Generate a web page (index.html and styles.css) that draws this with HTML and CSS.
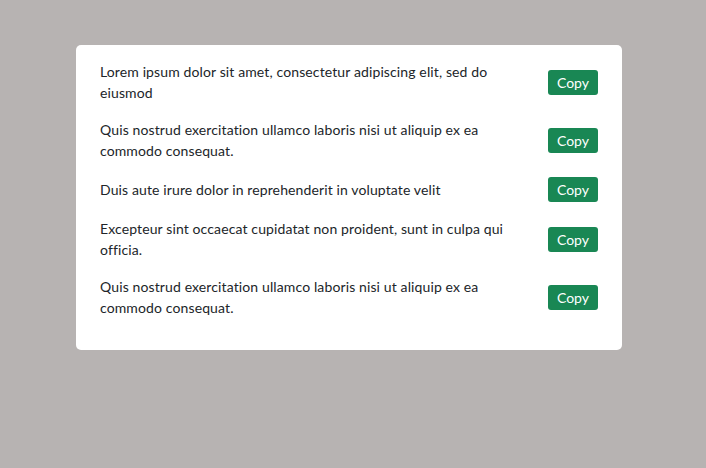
FILE: index.html
```html
<!DOCTYPE html>
<html>
<head>
	<title>copy list</title>
	<meta charset="utf-8"/>
	<link rel="stylesheet" href="styles.css">
</head>
<body>
	<div class="card">
		<div class="row">
			<div class="text">Lorem ipsum dolor sit amet, consectetur adipiscing elit, sed do eiusmod</div>
			<button class="btn">Copy</button>
		</div>
		<div class="row">
			<div class="text">Quis nostrud exercitation ullamco laboris nisi ut aliquip ex ea commodo consequat.</div>
			<button class="btn">Copy</button>
		</div>
		<div class="row">
			<div class="text">Duis aute irure dolor in reprehenderit in voluptate velit</div>
			<button class="btn">Copy</button>
		</div>
		<div class="row">
			<div class="text">Excepteur sint occaecat cupidatat non proident, sunt in culpa qui officia.</div>
			<button class="btn">Copy</button>
		</div>
		<div class="row">
			<div class="text">Quis nostrud exercitation ullamco laboris nisi ut aliquip ex ea commodo consequat.</div>
			<button class="btn">Copy</button>
		</div>
	</div>
</body>
</html>
```

FILE: styles.css
```css
html{
	background-color: #b7b3b2;
}
body{
	margin: 0;
	padding: 45px 0 0 76px;
	font-family: Lato, "Noto Sans", sans-serif;
	font-size: 14px;
	line-height: 21px;
	color: #212529;
}
.card{
	width: 498px;
	background-color: #fff;
	border-radius: 5px;
	padding: 16px 24px;
}
.row{
	display: flex;
	align-items: center;
	margin-bottom: 16px;
}
.text{
	flex: 1;
	margin-right: 24px;
	letter-spacing: 0.12px;
}
.btn{
	width: 50px;
	height: 25px;
	padding: 0;
	border: none;
	border-radius: 3px;
	background-color: #198754;
	color: #fff;
	font-family: Lato, "Noto Sans", sans-serif;
	font-size: 14px;
	cursor: pointer;
}
```
